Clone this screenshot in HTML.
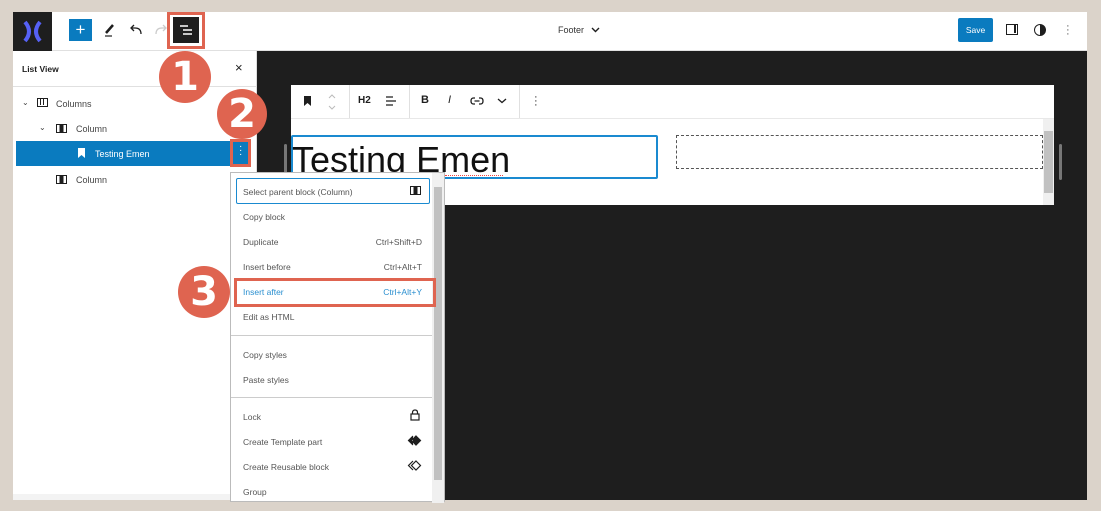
<!DOCTYPE html>
<html><head><meta charset="utf-8"><style>
*{box-sizing:border-box;margin:0;padding:0}
body{width:1101px;height:511px;background:#dbd3ca;position:relative;overflow:hidden;font-family:"Liberation Sans",sans-serif;font-size:9px;color:#1e1e1e}
.a{position:absolute}
.hdr{left:13px;top:12px;width:1074px;height:39px;background:#fff;border-bottom:1px solid #e0e0e0}
.logo{left:13px;top:12px;width:39px;height:39px;background:#1e1e1e}
.dark{left:257px;top:51px;width:830px;height:449px;background:#1e1e1e}
.side{left:13px;top:51px;width:244px;height:449px;background:#fff;border-right:1px solid #ddd}
.li{position:absolute;font-size:9px;color:#444}
.circ{position:absolute;border-radius:50%;background:#df6450;color:#fff;font-weight:bold;font-size:40px;text-align:center;font-family:"DejaVu Sans",sans-serif}
.rbox{position:absolute;border:3px solid #df6450}
.menu{left:230px;top:172px;width:215px;height:330px;background:#fff;border:1px solid #bbb}
.mi{position:absolute;left:12px;font-size:8.5px;color:#555}
.sc{position:absolute;right:12px;font-size:8.5px;color:#555}
</style></head><body>
<div class="a hdr"></div>
<div class="a logo"><svg width="39" height="39"><path d="M12 10 Q20 19.5 12 29" stroke="#5661f5" stroke-width="4" fill="none"/><path d="M27 10 Q19 19.5 27 29" stroke="#5661f5" stroke-width="4" fill="none"/></svg></div>
<div class="a" style="left:69px;top:19px;width:23px;height:22px;background:#0a7bbf;color:#fff;font-size:17px;text-align:center;line-height:21px">+</div>
<svg class="a" style="left:103px;top:22px" width="14" height="16"><path d="M3 11 L10 3" stroke="#1e1e1e" stroke-width="2.5"/><path d="M2 14 H9" stroke="#1e1e1e" stroke-width="1.2"/></svg>
<svg class="a" style="left:128px;top:23px" width="16" height="14"><path d="M13 11 Q13 5 7 5 H3 M6 2 L3 5 L6 8" stroke="#1e1e1e" stroke-width="1.3" fill="none"/></svg>
<svg class="a" style="left:153px;top:23px" width="16" height="14"><path d="M3 11 Q3 5 9 5 H13 M10 2 L13 5 L10 8" stroke="#ccc" stroke-width="1.3" fill="none"/></svg>
<div class="a" style="left:173px;top:17px;width:26px;height:26px;background:#1e1e1e"><svg width="26" height="26"><path d="M7 9 H15 M10 13 H19 M10 17 H19" stroke="#fff" stroke-width="1.4"/></svg></div>
<div class="rbox" style="left:167px;top:12px;width:38px;height:37px"></div>
<div class="a" style="left:558px;top:25px;font-size:9px;color:#333">Footer</div>
<svg class="a" style="left:591px;top:27px" width="9" height="6"><path d="M1 1 L4.5 4.5 L8 1" stroke="#1e1e1e" stroke-width="1.4" fill="none"/></svg>
<div class="a" style="left:958px;top:18px;width:35px;height:24px;background:#0a7bbf;color:#fff;font-size:8.5px;text-align:center;line-height:24px;border-radius:2px">Save</div>
<div class="a" style="left:1006px;top:24px;width:12px;height:11px;border:1.5px solid #1e1e1e"><div style="position:absolute;right:1px;top:0;width:2px;height:8px;background:#1e1e1e"></div></div>
<div class="a" style="left:1034px;top:24px;width:12px;height:12px;border:1.5px solid #1e1e1e;border-radius:50%;background:linear-gradient(90deg,#fff 50%,#1e1e1e 50%)"></div>
<div class="a" style="left:1066px;top:24px;color:#555;font-size:11px;line-height:4px">·<br>·<br>·</div>

<div class="a dark"></div>
<div class="a side"></div>
<div class="a" style="left:13px;top:86px;width:244px;height:1px;background:#e0e0e0"></div>
<div class="li" style="left:22px;top:64px;color:#1e1e1e;font-weight:bold;font-size:8.5px">List View</div>
<div class="li" style="left:235px;top:60px;font-size:13px;color:#1e1e1e">×</div>
<div class="li" style="left:22px;top:98px;font-size:8px">⌄</div>
<div class="a" style="left:37px;top:98px;width:11px;height:9px;border:1.4px solid #1e1e1e"><div style="position:absolute;left:2px;top:0;width:1.4px;height:6px;background:#1e1e1e"></div><div style="position:absolute;left:5px;top:0;width:1.4px;height:6px;background:#1e1e1e"></div></div>
<div class="li" style="left:56px;top:99px">Columns</div>
<div class="li" style="left:39px;top:123px;font-size:8px">⌄</div>
<div class="a" style="left:56px;top:124px;width:11px;height:9px;border:1.4px solid #1e1e1e;background:linear-gradient(90deg,#fff 30%,#1e1e1e 30%,#1e1e1e 70%,#fff 70%)"></div>
<div class="li" style="left:76px;top:124px">Column</div>
<div class="a" style="left:16px;top:141px;width:232px;height:25px;background:#0a7bbf"></div>
<svg class="a" style="left:77px;top:148px" width="9" height="11"><path d="M1 0 H8 V10 L4.5 7 L1 10Z" fill="#fff"/></svg>
<div class="li" style="left:95px;top:149px;color:#fff">Testing Emen</div>
<div class="a" style="left:239px;top:145px;color:#fff;font-size:10px;line-height:4px">·<br>·<br>·</div>
<div class="rbox" style="left:230px;top:139px;width:21px;height:28px"></div>
<div class="a" style="left:56px;top:175px;width:11px;height:9px;border:1.4px solid #1e1e1e;background:linear-gradient(90deg,#fff 30%,#1e1e1e 30%,#1e1e1e 70%,#fff 70%)"></div>
<div class="li" style="left:76px;top:175px">Column</div>
<div class="a" style="left:13px;top:494px;width:244px;height:6px;background:#f3f3f3"></div>

<div class="a" style="left:291px;top:85px;width:763px;height:120px;background:#fff"></div>
<div class="a" style="left:291px;top:118px;width:763px;height:1px;background:#e8e8e8"></div>
<div class="a" style="left:349px;top:85px;width:1px;height:33px;background:#e0e0e0"></div>
<div class="a" style="left:409px;top:85px;width:1px;height:33px;background:#e0e0e0"></div>
<div class="a" style="left:519px;top:85px;width:1px;height:33px;background:#e0e0e0"></div>
<svg class="a" style="left:303px;top:96px" width="9" height="11"><path d="M1 0 H8 V10 L4.5 7 L1 10Z" fill="#1e1e1e"/></svg>
<svg class="a" style="left:327px;top:93px" width="10" height="18"><path d="M2 5 L5 2 L8 5 M2 13 L5 16 L8 13" stroke="#bbb" fill="none"/></svg>
<div class="a" style="left:358px;top:95px;font-weight:bold;font-size:10px">H2</div>
<svg class="a" style="left:385px;top:95px" width="12" height="13"><path d="M1 2 H8 M1 6 H11 M1 10 H8" stroke="#1e1e1e" stroke-width="1.2"/></svg>
<div class="a" style="left:421px;top:94px;font-weight:bold;font-size:11px">B</div>
<div class="a" style="left:448px;top:94px;font-style:italic;font-size:11px">I</div>
<svg class="a" style="left:470px;top:96px" width="14" height="10"><path d="M5 2 H3.5 Q1 2 1 5 Q1 8 3.5 8 H5 M9 2 H10.5 Q13 2 13 5 Q13 8 10.5 8 H9 M4.5 5 H9.5" stroke="#1e1e1e" stroke-width="1.3" fill="none"/></svg>
<svg class="a" style="left:497px;top:98px" width="10" height="6"><path d="M1 1 L5 4.5 L9 1" stroke="#1e1e1e" stroke-width="1.3" fill="none"/></svg>
<div class="a" style="left:534px;top:95px;font-size:11px;line-height:4px">·<br>·<br>·</div>
<div class="a" style="left:291px;top:135px;width:367px;height:44px;border:2px solid #1a8ad0;border-radius:2px"></div>
<div class="a" style="left:292px;top:138px;font-size:36px;line-height:44px;color:#111;font-family:'Liberation Sans',sans-serif">Testing Emen</div>
<div class="a" style="left:445px;top:175px;width:58px;height:1px;border-top:1px dotted #e44"></div>
<div class="a" style="left:676px;top:135px;width:367px;height:34px;border:1px dashed #555"></div>
<div class="a" style="left:1043px;top:119px;width:11px;height:86px;background:#f0f0f0"><div style="position:absolute;left:1px;top:12px;width:9px;height:62px;background:#c1c1c1"></div></div>
<div class="a" style="left:1059px;top:144px;width:3px;height:36px;background:#777;border-radius:2px"></div>
<div class="a" style="left:284px;top:144px;width:3px;height:36px;background:#777;border-radius:2px"></div>

<div class="a menu">
<div style="position:absolute;left:5px;top:5px;width:194px;height:26px;border:1.5px solid #1a8ad0;border-radius:2px"></div>
<div class="mi" style="top:14px">Select parent block (Column)</div>
<div style="position:absolute;left:179px;top:13px;width:11px;height:9px;border:1.4px solid #1e1e1e;background:linear-gradient(90deg,#fff 30%,#1e1e1e 30%,#1e1e1e 70%,#fff 70%)"></div>
<div class="mi" style="top:39px">Copy block</div>
<div class="mi" style="top:64px">Duplicate</div><div class="sc" style="top:64px;right:22px">Ctrl+Shift+D</div>
<div class="mi" style="top:89px">Insert before</div><div class="sc" style="top:89px;right:22px">Ctrl+Alt+T</div>
<div class="mi" style="top:114px;color:#2a8fd0">Insert after</div><div class="sc" style="top:114px;right:22px;color:#2a8fd0">Ctrl+Alt+Y</div>
<div class="mi" style="top:139px">Edit as HTML</div>
<div style="position:absolute;left:0;top:162px;width:202px;height:1px;background:#ccc"></div>
<div class="mi" style="top:177px">Copy styles</div>
<div class="mi" style="top:202px">Paste styles</div>
<div style="position:absolute;left:0;top:224px;width:202px;height:1px;background:#ccc"></div>
<div class="mi" style="top:239px">Lock</div>
<svg style="position:absolute;left:179px;top:236px" width="10" height="12"><path d="M2.5 5 V3.5 Q2.5 1 5 1 Q7.5 1 7.5 3.5 V5" stroke="#1e1e1e" fill="none" stroke-width="1.2"/><rect x="1" y="5" width="8" height="6" stroke="#1e1e1e" fill="none" stroke-width="1.2"/></svg>
<div class="mi" style="top:264px">Create Template part</div>
<svg style="position:absolute;left:176px;top:262px" width="16" height="11"><path d="M6 1 L1.5 5.5 L6 10 M9 1 L13.5 5.5 L9 10 L4.5 5.5Z" stroke="#1e1e1e" fill="#1e1e1e" stroke-width="1.2"/></svg>
<div class="mi" style="top:289px">Create Reusable block</div>
<svg style="position:absolute;left:176px;top:287px" width="16" height="11"><path d="M6 1 L1.5 5.5 L6 10 M9 1 L13.5 5.5 L9 10 L4.5 5.5Z" stroke="#1e1e1e" fill="none" stroke-width="1.2"/></svg>
<div class="mi" style="top:314px">Group</div>
<div style="position:absolute;right:0;top:0;width:12px;height:330px;background:#f0f0f0"><div style="position:absolute;left:2px;top:14px;width:8px;height:293px;background:#c1c1c1"></div></div>
</div>
<div class="rbox" style="left:234px;top:278px;width:202px;height:29px"></div>

<div class="circ" style="left:159px;top:51px;width:52px;height:52px;line-height:52px">1</div>
<div class="circ" style="left:217px;top:89px;width:50px;height:50px;line-height:50px">2</div>
<div class="circ" style="left:178px;top:266px;width:52px;height:52px;line-height:52px">3</div>
</body></html>
